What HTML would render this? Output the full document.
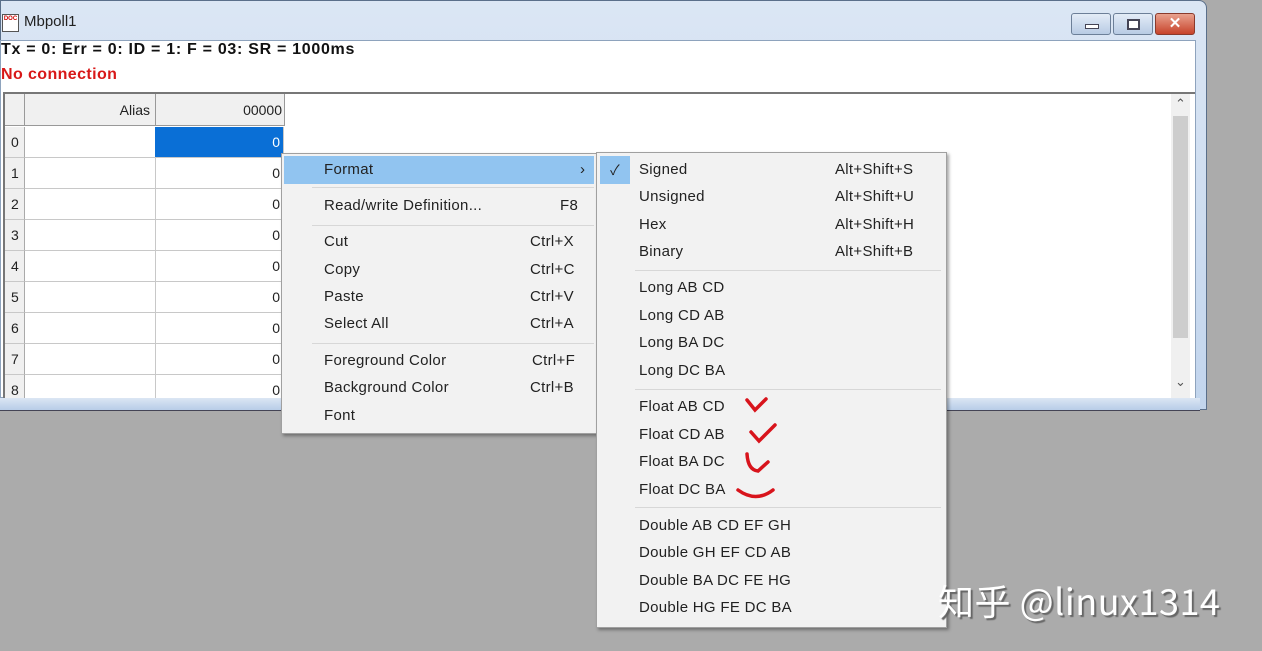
<!DOCTYPE html>
<html><head><meta charset="utf-8"><style>
body{margin:0;width:1262px;height:651px;background:#ababab;position:relative;overflow:hidden;font-family:"Liberation Sans","Noto Sans CJK SC",sans-serif}
.a{position:absolute}
.win{left:0;top:0;width:1207px;height:410px;background:linear-gradient(#dbe6f4,#c2d5ed);border:1px solid #5a6f8a;border-top-right-radius:8px;box-sizing:border-box}
.client{left:0;top:40px;width:1196px;height:358px;background:#fff;border:1px solid #8ea3bd;box-sizing:border-box}
.grid{left:3px;top:92px;width:1190px;height:306px;border-top:2px solid #777;border-left:2px solid #777;background:#fff;overflow:hidden}
.hc{background:#f0f0f0;border-right:1px solid #999;border-bottom:1px solid #999;box-sizing:border-box;font-size:14px;color:#222}
.cell{border-right:1px solid #c8c8c8;border-bottom:1px solid #c8c8c8;box-sizing:border-box;font-size:14px;color:#222;text-align:right;padding-right:3px;line-height:30px}
.rh{background:#f0f0f0;border-right:1px solid #aaa;border-bottom:1px solid #c8c8c8;box-sizing:border-box;font-size:14px;color:#222;padding-left:6px;line-height:30px}
.menu{background:#f2f2f2;border:1px solid #a0a0a0;box-shadow:2px 2px 3px rgba(0,0,0,.35);font-size:15px;color:#222;letter-spacing:0.3px}
.mi{position:absolute;left:0;height:20px;line-height:20px;width:100%}
.sep{position:absolute;height:1px;background:#d7d7d7}
</style></head><body>
<div class="a win"></div>
<div class="a" style="left:2px;top:14px;width:15px;height:16px;border:1px solid #555;background:#fff;font-size:6px;color:#c00;line-height:8px;text-align:center;font-weight:bold">DOC</div>
<div class="a" style="left:24px;top:13px;font-size:15px;color:#222">Mbpoll1</div>
<div class="a" style="left:1071px;top:13px;width:38px;height:20px;border:1px solid #6c7f98;border-radius:3px;background:linear-gradient(#e3ecf7,#b8cbe4)"><div class="a" style="left:13px;top:10px;width:12px;height:3px;background:#fff;border:1px solid #445"></div></div>
<div class="a" style="left:1113px;top:13px;width:38px;height:20px;border:1px solid #6c7f98;border-radius:3px;background:linear-gradient(#e3ecf7,#b8cbe4)"><div class="a" style="left:13px;top:5px;width:9px;height:7px;border:2px solid #445;background:#fff"></div></div>
<div class="a" style="left:1155px;top:13px;width:38px;height:20px;border:1px solid #8a3a2c;border-radius:3px;background:linear-gradient(#e9a28f,#c7432b);color:#fff;font-weight:bold;text-align:center;font-size:15px;line-height:20px">✕</div>
<div class="a client"></div>
<div class="a" style="left:1px;top:41px;font-size:16px;font-weight:bold;color:#111;letter-spacing:0.7px">Tx = 0: Err = 0: ID = 1: F = 03: SR = 1000ms</div>
<div class="a" style="left:1px;top:66px;font-size:16px;font-weight:bold;color:#d81818;letter-spacing:0.4px">No connection</div>
<div class="a grid">
 <div class="a hc" style="left:0;top:0;width:20px;height:32px"></div>
 <div class="a hc" style="left:20px;top:0;width:131px;height:32px;text-align:right;padding-right:5px;line-height:32px">Alias</div>
 <div class="a hc" style="left:151px;top:0;width:129px;height:32px;text-align:right;padding-right:2px;line-height:32px">00000</div>
 <div class="a" style="left:1166px;top:0;width:19px;height:306px;background:#f0f0f0"></div>
 <div class="a" style="left:1168px;top:22px;width:15px;height:222px;background:#cdcdcd"></div>
 <div class="a" style="left:1170px;top:2px;font-size:13px;color:#555">&#8963;</div>
 <div class="a" style="left:1170px;top:280px;font-size:13px;color:#555">&#8964;</div>
</div>
<div id="rows"></div>
<script>
var h='';for(var i=0;i<9;i++){var t=127+i*31;h+='<div class="a rh" style="left:5px;top:'+t+'px;width:20px;height:31px">'+i+'</div><div class="a cell" style="left:25px;top:'+t+'px;width:131px;height:31px"></div><div class="a cell" style="left:155px;top:'+t+'px;width:129px;height:31px;'+(i==0?'background:#0a6fd6;color:#fff;':'')+'">0</div>';}
document.getElementById('rows').innerHTML=h;
</script>
<div class="a" style="left:0;top:398px;width:1200px;height:12px;background:linear-gradient(#dbe6f4,#b8cde8);border-bottom:1px solid #445"></div>

<div class="a menu" style="left:281px;top:153px;width:316px;height:279px">
 <div class="a" style="left:2px;top:2px;width:310px;height:28px;background:#91c4f0"></div>
 <div class="mi" style="top:6px"><span class="a" style="left:42px">Format</span><span class="a" style="left:298px">›</span></div>
 <div class="sep" style="left:30px;width:282px;top:33px"></div>
 <div class="mi" style="top:42px"><span class="a" style="left:42px">Read/write Definition...</span><span class="a" style="left:278px">F8</span></div>
 <div class="sep" style="left:30px;width:282px;top:71px"></div>
 <div class="mi" style="top:78px"><span class="a" style="left:42px">Cut</span><span class="a" style="left:248px">Ctrl+X</span></div>
 <div class="mi" style="top:106px"><span class="a" style="left:42px">Copy</span><span class="a" style="left:248px">Ctrl+C</span></div>
 <div class="mi" style="top:133px"><span class="a" style="left:42px">Paste</span><span class="a" style="left:248px">Ctrl+V</span></div>
 <div class="mi" style="top:160px"><span class="a" style="left:42px">Select All</span><span class="a" style="left:248px">Ctrl+A</span></div>
 <div class="sep" style="left:30px;width:282px;top:189px"></div>
 <div class="mi" style="top:197px"><span class="a" style="left:42px">Foreground Color</span><span class="a" style="left:250px">Ctrl+F</span></div>
 <div class="mi" style="top:224px"><span class="a" style="left:42px">Background Color</span><span class="a" style="left:248px">Ctrl+B</span></div>
 <div class="mi" style="top:252px"><span class="a" style="left:42px">Font</span></div>
</div>

<div class="a menu" style="left:596px;top:152px;width:349px;height:474px">
 <div class="a" style="left:3px;top:3px;width:30px;height:28px;background:#91c4f0;text-align:center;line-height:28px;font-size:14px">✓</div>
 <div id="sub"></div>
</div>
<script>
var it=[['Signed','Alt+Shift+S',7],['Unsigned','Alt+Shift+U',34],['Hex','Alt+Shift+H',62],['Binary','Alt+Shift+B',89],['Long AB CD','',125],['Long CD AB','',153],['Long BA DC','',180],['Long DC BA','',208],['Float AB CD','',244],['Float CD AB','',272],['Float BA DC','',299],['Float DC BA','',327],['Double AB CD EF GH','',363],['Double GH EF CD AB','',390],['Double BA DC FE HG','',418],['Double HG FE DC BA','',445]];
var s='';it.forEach(function(x){s+='<div class="mi" style="top:'+x[2]+'px"><span class="a" style="left:42px">'+x[0]+'</span><span class="a" style="left:238px">'+x[1]+'</span></div>'});
[117,236,354].forEach(function(t){s+='<div class="sep" style="left:38px;width:306px;top:'+t+'px"></div>'});
document.getElementById('sub').innerHTML=s;
</script>
<svg class="a" style="left:0;top:0" width="1262" height="651">
<g fill="none" stroke="#d8141c" stroke-width="3.5" stroke-linecap="round">
<path d="M747 400 L755 410 L766 399"/>
<path d="M751 432 L759 441 L775 425"/>
<path d="M747 454 Q748 470 758 471 L768 462"/>
<path d="M738 490 Q756 503 773 490"/>
</g></svg>
<div class="a" style="left:938px;top:574px;font-size:36px;color:#fff;text-shadow:2px 2px 1px #666;font-family:'Noto Sans CJK SC',sans-serif;letter-spacing:0.5px">知乎 @linux1314</div>
</body></html>
